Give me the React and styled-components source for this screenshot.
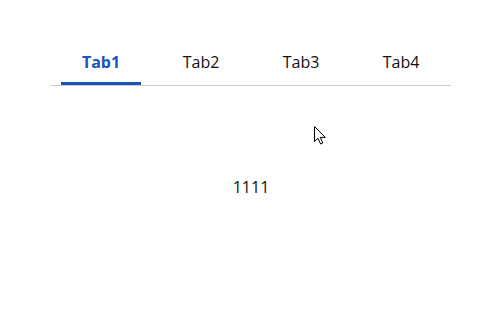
import React, { useState } from 'react';
import styled, { createGlobalStyle } from 'styled-components';

const GlobalStyle = createGlobalStyle`
  body {
    margin: 0;
    background: #ffffff;
    font-family: 'Open Sans', 'Noto Sans', sans-serif;
  }
`;

const Page = styled.div`
  position: relative;
  width: 502px;
  height: 332px;
  padding: 40px 51px 0;
  box-sizing: border-box;
`;

const TabList = styled.div`
  display: flex;
  width: 400px;
  border-bottom: 1px solid #cccccc;
`;

const Tab = styled.button`
  flex: 1;
  height: 45px;
  padding: 0 10px;
  border: none;
  background: none;
  font-family: inherit;
  font-size: 16px;
  font-weight: ${(p) => (p.$active ? 700 : 400)};
  color: ${(p) => (p.$active ? '#1a56b3' : '#111111')};
  cursor: pointer;
  display: flex;
  flex-direction: column;
  align-items: stretch;
  justify-content: flex-end;
`;

const TabLabel = styled.span`
  line-height: 20px;
  margin-bottom: 10px;
`;

const Indicator = styled.span`
  height: 3px;
  background: ${(p) => (p.$active ? '#1a56b3' : 'transparent')};
`;

const Panel = styled.div`
  width: 400px;
  padding-top: 91px;
  text-align: center;
  font-size: 16px;
  line-height: 20px;
  color: #111111;
`;

const Pointer = styled.svg`
  position: absolute;
  left: 314px;
  top: 126px;
`;

const tabs = [
  { key: 'tab1', label: 'Tab1', content: '1111' },
  { key: 'tab2', label: 'Tab2', content: '2222' },
  { key: 'tab3', label: 'Tab3', content: '3333' },
  { key: 'tab4', label: 'Tab4', content: '4444' },
];

export default function App() {
  const [active, setActive] = useState('tab1');
  const current = tabs.find((t) => t.key === active);

  return (
    <Page>
      <GlobalStyle />
      <TabList>
        {tabs.map((t) => (
          <Tab key={t.key} $active={t.key === active} onClick={() => setActive(t.key)}>
            <TabLabel>{t.label}</TabLabel>
            <Indicator $active={t.key === active} />
          </Tab>
        ))}
      </TabList>
      <Panel>{current.content}</Panel>
      <Pointer width="13" height="19" viewBox="0 0 13 19">
        <path
          d="M0.5 0.5 L0.5 15.5 L4 12.2 L6.6 18 L8.8 17 L6.3 11.4 L11.3 11.4 Z"
          fill="#ffffff"
          stroke="#000000"
          strokeWidth="1"
          strokeLinejoin="miter"
        />
      </Pointer>
    </Page>
  );
}
